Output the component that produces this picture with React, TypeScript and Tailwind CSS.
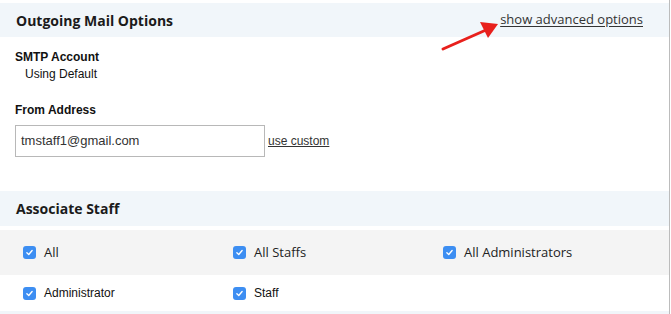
import React from 'react';

const OPEN = { fontFamily: '"Open Sans", "Noto Sans", sans-serif' };
const ARIAL = { fontFamily: '"Liberation Sans", Arial, sans-serif' };

function Check() {
  return (
    <span className="w-[13px] h-[13px] rounded-[3px] bg-[#3d8ef2] flex items-center justify-center shrink-0">
      <svg viewBox="0 0 12 12" className="w-[9px] h-[9px]" fill="none" stroke="white" strokeWidth={1.8} strokeLinecap="round" strokeLinejoin="round">
        <path d="M2.5 6.3 L5 8.6 L9.5 3.4" />
      </svg>
    </span>
  );
}

function CheckItem({ label, arial }: { label: string; arial?: boolean }) {
  return (
    <label className="flex items-center gap-[8px]">
      <Check />
      <span className={arial ? 'text-[12px] text-[#111]' : 'text-[13px] text-[#222]'} style={arial ? ARIAL : OPEN}>
        {label}
      </span>
    </label>
  );
}

export default function App() {
  return (
    <div className="w-[671px] h-[314px] bg-white overflow-hidden">
      <div className="w-[670px] h-full border-r border-[#bcbcbc] pt-[3px] relative">
        {/* Outgoing mail header */}
        <div className="h-[34px] bg-[#f1f6fa] flex items-center justify-between pl-[16px] pr-[26px]">
          <h2 className="text-[14px] font-bold text-[#1b1b1b]" style={OPEN}>Outgoing Mail Options</h2>
          <a className="text-[13px] text-[#333] underline underline-offset-2" style={OPEN}>show advanced options</a>
        </div>

        <svg className="absolute left-[438px] top-[18px]" width="66" height="36" viewBox="0 0 66 36">
          <line x1="5" y1="31" x2="48" y2="12" stroke="#e8201c" strokeWidth="3" strokeLinecap="round" />
          <polygon points="60,6 42,4 50,20" fill="#e8201c" />
        </svg>

        <div className="px-[15px] pt-[12px]" style={ARIAL}>
          <div className="text-[12px] font-bold text-[#111] leading-[17px]">SMTP Account</div>
          <div className="text-[12px] text-[#111] leading-[17px] pl-[10px]">Using Default</div>
          <div className="text-[12px] font-bold text-[#111] leading-[17px] mt-[19px]">From Address</div>
          <div className="flex items-center gap-[3px] mt-[6px]">
            <div className="w-[250px] h-[32px] border border-[#b8b8b8] flex items-center pl-[5px] text-[13px] text-[#333]">
              tmstaff1@gmail.com
            </div>
            <a className="text-[12px] text-[#333] underline">use custom</a>
          </div>
        </div>

        {/* Associate staff */}
        <div className="mt-[34px] h-[35px] bg-[#f1f6fa] flex items-center pl-[16px]">
          <h2 className="text-[14px] font-bold text-[#1b1b1b]" style={OPEN}>Associate Staff</h2>
        </div>
        <div className="mt-[4px] h-[45px] bg-[#f4f4f4] grid grid-cols-[210px_210px_210px] items-center pl-[23px]">
          <CheckItem label="All" />
          <CheckItem label="All Staffs" />
          <CheckItem label="All Administrators" />
        </div>
        <div className="h-[36px] grid grid-cols-[210px_210px_210px] items-center pl-[23px]">
          <CheckItem label="Administrator" arial />
          <CheckItem label="Staff" arial />
        </div>
        <div className="h-[10px] bg-[#f1f6fa]" />
      </div>
    </div>
  );
}
